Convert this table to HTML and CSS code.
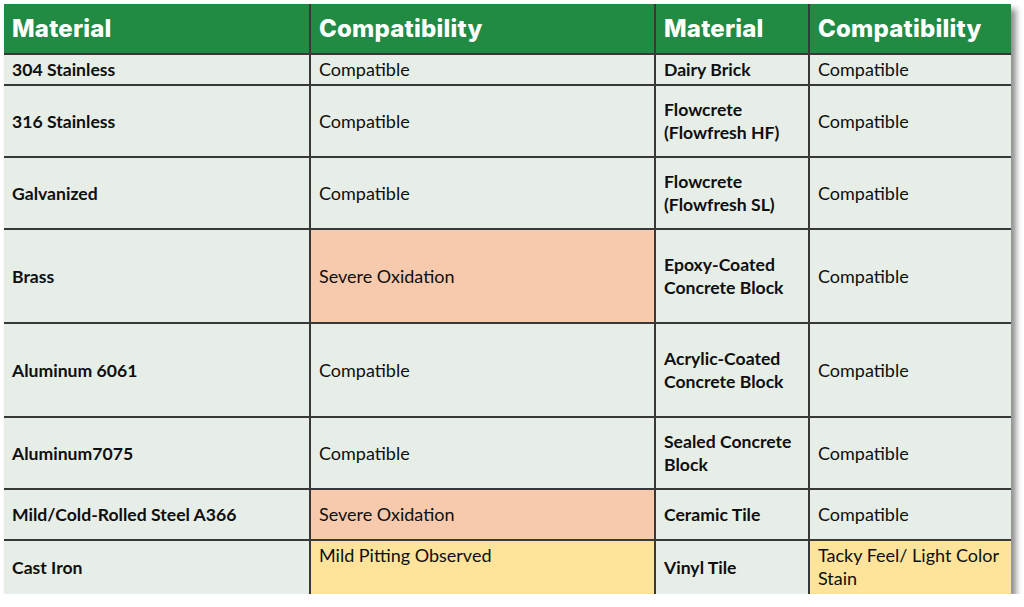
FILE: index.html
```html
<!DOCTYPE html>
<html>
<head>
<meta charset="utf-8">
<link rel="stylesheet" href="styles.css">
</head>
<body>
<div class="page">
<table class="grid">
  <colgroup>
    <col class="c1"><col class="c2"><col class="c3"><col class="c4">
  </colgroup>
  <thead>
    <tr class="head">
      <th>Material</th><th>Compatibility</th><th>Material</th><th>Compatibility</th>
    </tr>
  </thead>
  <tbody>
    <tr class="r1">
      <td class="mat">304 Stainless</td><td>Compatible</td>
      <td class="mat">Dairy Brick</td><td>Compatible</td>
    </tr>
    <tr class="r2">
      <td class="mat">316 Stainless</td><td>Compatible</td>
      <td class="mat">Flowcrete<br>(Flowfresh HF)</td><td>Compatible</td>
    </tr>
    <tr class="r3">
      <td class="mat">Galvanized</td><td>Compatible</td>
      <td class="mat">Flowcrete<br>(Flowfresh SL)</td><td>Compatible</td>
    </tr>
    <tr class="r4">
      <td class="mat">Brass</td><td class="bad">Severe Oxidation</td>
      <td class="mat">Epoxy-Coated<br>Concrete Block</td><td>Compatible</td>
    </tr>
    <tr class="r5">
      <td class="mat">Aluminum 6061</td><td>Compatible</td>
      <td class="mat">Acrylic-Coated<br>Concrete Block</td><td>Compatible</td>
    </tr>
    <tr class="r6">
      <td class="mat">Aluminum7075</td><td>Compatible</td>
      <td class="mat">Sealed Concrete<br>Block</td><td>Compatible</td>
    </tr>
    <tr class="r7">
      <td class="mat">Mild/Cold-Rolled Steel A366</td><td class="bad">Severe Oxidation</td>
      <td class="mat">Ceramic Tile</td><td>Compatible</td>
    </tr>
    <tr class="r8">
      <td class="mat">Cast Iron</td><td class="warn top">Mild Pitting Observed</td>
      <td class="mat">Vinyl Tile</td><td class="warn top">Tacky Feel/ Light Color Stain</td>
    </tr>
  </tbody>
</table>
</div>
</body>
</html>
```

FILE: styles.css
```css
html, body {
  margin: 0;
  padding: 0;
  background: #ffffff;
}

.page {
  padding: 4px 0 0 4px;
}

.grid {
  width: 1007px;
  border-collapse: collapse;
  table-layout: fixed;
  background: #e7eee7;
  box-shadow: 5px 5px 6px rgba(0, 0, 0, 0.45);
  font-family: Lato, "Open Sans", sans-serif;
  font-size: 18px;
  color: #0f0f0f;
}

.c1 { width: 306px; }
.c2 { width: 345px; }
.c3 { width: 154px; }
.c4 { width: 202px; }

.grid th,
.grid td {
  padding: 0 8px;
  text-align: left;
  vertical-align: middle;
  line-height: 23px;
  border: 2px solid #383838;
}

.grid tr > :first-child { border-left: none; }
.grid tr > :last-child { border-right: none; }
.grid thead th { border-top: none; }
.grid tbody tr:last-child td { border-bottom: none; }

.head th {
  height: 49px;
  background: #228b43;
  color: #ffffff;
  font-family: Inter, "DejaVu Sans", sans-serif;
  font-weight: 800;
  font-size: 24px;
  letter-spacing: 0.2px;
}

.mat {
  font-weight: 700;
  font-size: 17.6px;
}

.r1 td { height: 29px; }
.r2 td, .r3 td, .r6 td { height: 70px; }
.r4 td, .r5 td { height: 92px; }
.r7 td { height: 49px; }
.r8 td { height: 50px; }

.bad { background: #f7c9ad; }
.warn { background: #fee49a; }

.grid td.top {
  vertical-align: top;
  padding-top: 3px;
}
```
